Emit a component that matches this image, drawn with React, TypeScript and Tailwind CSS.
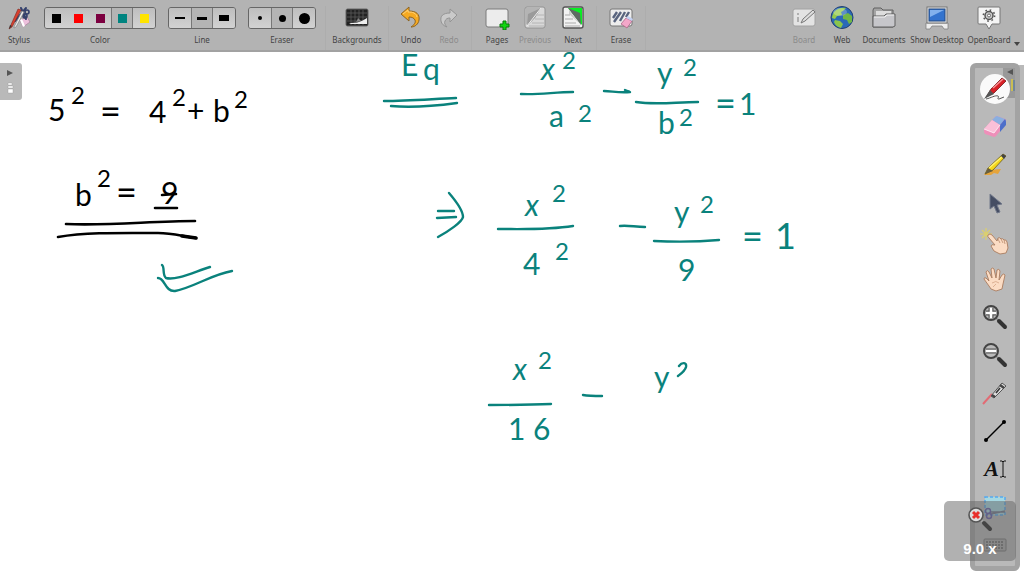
import React from "react";

const colors = [
  { name: "Black", fill: "bg-black" },
  { name: "Red", fill: "bg-[#fe0000]" },
  { name: "Maroon", fill: "bg-[#7c0040]" },
  { name: "Teal", fill: "bg-[#008480]", active: true },
  { name: "Yellow", fill: "bg-[#ffe400]" },
];

const lines = [
  { name: "Fine line", shape: "w-[10px] h-[2px] bg-black" },
  { name: "Medium line", shape: "w-[10px] h-[3px] bg-black", active: true },
  { name: "Strong line", shape: "w-[10px] h-[6px] bg-black" },
];

const erasers = [
  { name: "Small eraser", shape: "w-1 h-1 rounded-full bg-black" },
  { name: "Medium eraser", shape: "w-[7px] h-[7px] rounded-full bg-black", active: true },
  { name: "Large eraser", shape: "w-[11px] h-[11px] rounded-full bg-black" },
];

// toolbar icons
const StylusIcon = () => (
  <svg width="24" height="24" viewBox="0 0 24 24">
    <path d="M13 14 20 11l3 5-7 5z" fill="#ecc0dc" stroke="#a77f9c" strokeWidth=".7" />
    <path d="m13 14 3 7 2-1-3-7z" fill="#fff" />
    <path d="M8 15 19 2M14 2l5 11" stroke="#33406c" strokeWidth="2" strokeLinecap="round" />
    <circle cx="18" cy="10" r="2" fill="none" stroke="#33406c" strokeWidth="1.6" />
    <circle cx="20" cy="6" r="2" fill="none" stroke="#33406c" strokeWidth="1.6" />
    <path d="M3 21 11 3l3 1-9 17-3 2z" fill="#d9402f" stroke="#7c2620" strokeWidth=".6" />
    <path d="m7 21 8-16 2 1-8 15-2 1z" fill="#eee" stroke="#777" strokeWidth=".6" />
    <path d="m2 23 1-4 2 1z" fill="#333" />
  </svg>
);

const BackgroundsIcon = () => (
  <svg width="24" height="24" viewBox="0 0 24 24">
    <rect x="1" y="3" width="22" height="17" rx="1.5" fill="#222" stroke="#666" />
    <path d="M2 7h20M2 11h20M2 15h20M6 4v15M10 4v15M14 4v15M18 4v15" stroke="#5c5c5c" strokeWidth=".8" />
    <path d="M6 17c6 0 10-1 16-5v6H4z" fill="#eee" />
    <path d="M6 17c5 0 6-2 7-5l3 3z" fill="#888" />
  </svg>
);

const UndoIcon = () => (
  <svg width="24" height="24" viewBox="0 0 24 24">
    <path
      d="M2 8 10 1v4c7 0 11 3 10 9-.5 4-4 7-8 7 3-2 5-4 4-7-1-2-3-3-6-3v4z"
      fill="#f6aa22"
      stroke="#8c6424"
      strokeLinejoin="round"
    />
    <path d="m4 8 5-4v2c5 0 8 1 9 5" fill="none" stroke="#ffd27a" />
  </svg>
);

const RedoIcon = () => (
  <svg width="24" height="24" viewBox="0 0 24 24">
    <path
      d="M20 9 13 3v4C6 7 3 10 4 15c.5 3 3 5 6 6-2-2-3-4-2-6 1-2 2-3 5-3v4z"
      fill="#cacaca"
      stroke="#949494"
      strokeLinejoin="round"
    />
  </svg>
);

const PagesIcon = () => (
  <svg width="26" height="24" viewBox="0 0 26 24">
    <rect x="2" y="3" width="22" height="18" rx="2" fill="#ececec" stroke="#7a7a7a" />
    <path d="M20 16h3v3h3v3h-3v3h-3v-3h-3v-3h3z" transform="translate(-1 -1)" fill="#10d510" stroke="#087a08" />
  </svg>
);

const PreviousIcon = () => (
  <svg width="24" height="24" viewBox="0 0 24 24">
    <rect x="2" y="1" width="20" height="21" rx="2" fill="#d9d9d9" stroke="#929292" />
    <path d="M3 2h15L3 19z" fill="#b4b4b4" />
    <path d="M4 20 5 8 18 2l-6 10z" fill="#9a9a9a" />
    <path d="M14 9h7M12 13h9M9 17h12M6 20h15" stroke="#b4b4b4" />
    <path d="M4 20 18 2" stroke="#eee" />
  </svg>
);

const NextIcon = () => (
  <svg width="24" height="24" viewBox="0 0 24 24">
    <rect x="2" y="1" width="20" height="21" rx="2" fill="#f2f2f2" stroke="#555" strokeWidth="1.4" />
    <path d="M7 2h14v17z" fill="#08ef23" />
    <path d="M7 2 20 19l-1-12z" fill="#5f6a64" />
    <path d="M8 4v4l10 9z" fill="#ccc" />
    <path d="M4 9h5M4 13h8M4 17h11M4 20h15" stroke="#aaa" />
  </svg>
);

const EraseIcon = () => (
  <svg width="26" height="24" viewBox="0 0 26 24">
    <rect x="2" y="3" width="22" height="17" rx="2" fill="#ededed" stroke="#777" />
    <path d="m5 12 4-6M6 16l7-10M12 15l5-9M18 11l3-5" fill="none" stroke="#59647e" strokeWidth="2.4" />
    <path d="m13 18 5-6 6 3-5 7z" fill="#f3a7c9" stroke="#a96786" strokeWidth=".8" />
    <path d="m18 12 2-2 5 3-1 2z" fill="#c2d0f2" />
  </svg>
);

const BoardIcon = () => (
  <svg width="26" height="24" viewBox="0 0 26 24">
    <rect x="2" y="3" width="22" height="17" rx="2" fill="#e3e3e3" stroke="#a2a2a2" />
    <path d="M7 7v2M7 11v5" stroke="#999" strokeWidth="1.4" />
    <path d="m10 17 2-4L22 4l2 2-10 9z" fill="#ddd" stroke="#777" />
  </svg>
);

const WebIcon = () => (
  <svg width="24" height="24" viewBox="0 0 24 24">
    <circle cx="12" cy="11.5" r="11" fill="#2a69b8" stroke="#203f72" />
    <path d="M4 6c3-4 9-5 12-4l-3 3-2 1 1 3-5 1-2 3-3-1c0-2 1-4 2-6z" fill="#95ca4b" />
    <path d="m13 9 5-2 4 3v6l-3 2-2-4-4-1z" fill="#70b646" />
    <path d="m5 14 5 1 3 3-2 4c-4-1-6-3-7-6z" fill="#8bc54b" />
    <ellipse cx="10" cy="6" rx="7" ry="4" fill="#fff" opacity=".25" />
  </svg>
);

const DocumentsIcon = () => (
  <svg width="26" height="24" viewBox="0 0 26 24">
    <path d="M2 21V4l1-2h7l2 2h10v17z" fill="#a4a4a4" stroke="#606060" />
    <path d="M5 5h15v12H5z" fill="#ddd" />
    <path d="M2 21V10h11l2-2h9v12l-2 1z" fill="#c6c6ca" stroke="#606060" />
    <path d="M3 11h11l2-2h7" fill="none" stroke="#f3f3f3" />
  </svg>
);

const DesktopIcon = () => (
  <svg width="26" height="24" viewBox="0 0 26 24">
    <path d="M2 17h22v6h-4l-2-3H8l-2 3H2z" fill="#ededed" stroke="#777" strokeWidth=".7" />
    <rect x="3" y="1" width="20" height="16" fill="#e8e8e8" stroke="#777" />
    <rect x="5" y="3" width="16" height="12" fill="#3373ce" stroke="#274b80" />
    <path d="M6 4h14L6 11z" fill="#82b1ed" />
  </svg>
);

const OpenBoardIcon = () => (
  <svg width="26" height="24" viewBox="0 0 26 24">
    <path d="M3 1h20q1 0 1 1v15q0 1-1 1h-7l-3 5-3-5H3q-1 0-1-1V2q0-1 1-1z" fill="#f4f4f4" stroke="#777" />
    <circle cx="13" cy="9.5" r="4" fill="#ccc" stroke="#555" strokeWidth="1.5" />
    <circle cx="13" cy="9.5" r="5.6" fill="none" stroke="#555" strokeWidth="1.6" strokeDasharray="1.6 2.8" />
    <circle cx="13" cy="9.5" r="1.5" fill="#fff" stroke="#666" />
  </svg>
);

// palette icons
const PenIcon = () => (
  <svg width="30" height="30" viewBox="0 0 30 30">
    <circle cx="15" cy="15" r="15" fill="#fafafa" />
    <path d="m7 22 4-7L22 4l4 3-12 12z" fill="#d72027" stroke="#6e171b" strokeWidth=".8" />
    <path d="M13 14 23 5" stroke="#f79093" strokeWidth="1.5" />
    <path d="m4 25 6-9 4 4z" fill="#555" />
    <path d="M6 25c5-1 9-4 12-3 2 1-2 3 1 3l5-2" fill="none" stroke="#555" />
  </svg>
);

const EraserIcon = () => (
  <svg width="26" height="26" viewBox="0 0 26 26">
    <path d="m2 15 11-12q1-1 2-1l8 3q1 0 1 2v3L14 22q-1 1-2 1l-9-3-1-2z" fill="#ee8fb9" />
    <path d="m10 6 3-3q1-1 2-1l8 3-5 6z" fill="#8aafe0" />
    <path d="m18 11 5-6q1 1 1 3v3l-6 7z" fill="#4c6fca" />
    <path d="m2 15 8-9 8 5-6 8z" fill="#fac0d8" />
    <path d="m2 15 10 4 6-8" fill="none" stroke="#fff" strokeWidth=".7" />
  </svg>
);

const MarkerIcon = () => (
  <svg width="26" height="26" viewBox="0 0 26 26">
    <path d="m2 23 4-5 13-1-3 5-4-1-3 2z" fill="#e6a43a" />
    <path d="m3 22 3-6L21 2l3 2-13 14z" fill="#f6d71a" stroke="#675719" strokeWidth=".8" />
    <path d="M7 16 21 4" stroke="#fff26e" strokeWidth="1.5" />
    <path d="m3 22 3-6 5 3z" fill="#665d40" />
    <path d="m19 4 2-2 3 2-2 3z" fill="#444" />
  </svg>
);

const ArrowIcon = () => (
  <svg width="24" height="26" viewBox="0 0 24 26">
    <path d="M7 4v15l4-3 3 7 3-1-3-7 5-1z" fill="#454d63" stroke="#71788a" />
  </svg>
);

const PointIcon = () => (
  <svg width="32" height="30" viewBox="0 0 32 30">
    <path d="M7 2v12M1 8h12M3 4l8 8M11 4l-8 8" stroke="#ddd06b" strokeWidth="1.2" />
    <path
      d="m9 9q2-2 4 0l5 6 1-3q2-1 3 1 2-1 3 1 2-1 3 2l1 6-2 5-6 1-6-3-3-5q0-2 4-1l-6-7q-2-2-1-3z"
      fill="#fbdcc4"
      stroke="#aa7d60"
      strokeWidth=".9"
    />
    <path d="m19 13 2 4m1-4 2 4m1-3 1 4" stroke="#b98b6d" strokeWidth=".8" />
  </svg>
);

const HandIcon = () => (
  <svg width="24" height="26" viewBox="0 0 24 26">
    <path
      d="m6 20-5-7q0-2 2-1l3 3-3-9q1-3 3 0l3 6-1-9q2-2 3 0l2 9 1-8q2-2 3 1l-1 9 3-5q2-2 3 0l-2 9-1 5-6 2-5-2z"
      fill="#fbdcc4"
      stroke="#aa7d60"
      strokeWidth=".9"
      strokeLinejoin="round"
    />
    <path d="M9 17q4-3 7 0M10 21l3-3" fill="none" stroke="#d3a487" strokeWidth=".8" />
  </svg>
);

const ZoomIcon = ({ sign }: { sign: string }) => (
  <svg width="26" height="26" viewBox="0 0 26 26">
    <path d="m14 14 4 4" stroke="#999" strokeWidth="2" />
    <path d="m17 17 6 6" stroke="#333" strokeWidth="4" strokeLinecap="round" />
    <circle cx="9" cy="9" r="7" fill="#bbb" stroke="#444" strokeWidth="2" />
    <path d={sign} stroke="#555" strokeWidth="5" />
    <path d={sign} stroke="#fff" strokeWidth="2.6" />
  </svg>
);

const LaserIcon = () => (
  <svg width="26" height="26" viewBox="0 0 26 26">
    <path d="m1 24 9-10" stroke="#e26b74" strokeWidth="2" />
    <path d="M9 16 20 3l4 3-12 12z" fill="#ddd" stroke="#555" />
    <path d="m10 15 3 2M18 5l4 3" stroke="#444" strokeWidth="2.5" />
    <path d="m14 13 4-5" stroke="#333" strokeWidth="1.6" />
  </svg>
);

const LineIcon = () => (
  <svg width="24" height="24" viewBox="0 0 24 24">
    <path d="M3 21 21 3" stroke="#000" strokeWidth="1.4" />
    <circle cx="3" cy="21" r="2" />
    <circle cx="21" cy="3" r="2" />
  </svg>
);

const TextIcon = () => (
  <span className="flex items-center gap-px font-['Liberation_Serif',serif] text-[22px] leading-none text-[#111]">
    <b className="italic">A</b>
    <svg width="6" height="18" viewBox="0 0 6 18">
      <path d="M0 1h2l1 1 1-1h2M3 2v14M0 17h2l1-1 1 1h2" fill="none" stroke="#111" />
    </svg>
  </span>
);

const CaptureIcon = () => (
  <svg width="24" height="26" viewBox="0 0 24 26">
    <rect x="2" y="3" width="20" height="18" fill="#a6d8e2" stroke="#55a9ee" strokeWidth="1.5" strokeDasharray="3 2" />
    <path d="M7 18h15M8 20l14-3" stroke="#73798c" strokeWidth="1.4" />
    <circle cx="5" cy="17" r="2.5" fill="none" stroke="#655eaa" strokeWidth="1.5" />
    <circle cx="6" cy="22" r="2.5" fill="none" stroke="#655eaa" strokeWidth="1.5" />
  </svg>
);

const KeyboardIcon = () => (
  <svg width="24" height="24" viewBox="0 0 24 24">
    <rect x="1" y="6" width="22" height="12" rx="1" fill="#aaa" stroke="#777" />
    <path d="M3 9h18M3 12h18M3 15h18" stroke="#666" strokeWidth="1.6" strokeDasharray="2 1" />
  </svg>
);

const tools = [
  { name: "Pen", icon: <PenIcon /> },
  { name: "Eraser", icon: <EraserIcon /> },
  { name: "Marker", icon: <MarkerIcon /> },
  { name: "Select", icon: <ArrowIcon /> },
  { name: "Interact", icon: <PointIcon /> },
  { name: "Scroll page", icon: <HandIcon /> },
  { name: "Zoom in", icon: <ZoomIcon sign="M9 4v10M4 9h10" /> },
  { name: "Zoom out", icon: <ZoomIcon sign="M4 9h10" /> },
  { name: "Laser pointer", icon: <LaserIcon /> },
  { name: "Draw line", icon: <LineIcon /> },
  { name: "Write text", icon: <TextIcon /> },
  { name: "Capture", icon: <CaptureIcon /> },
  { name: "Keyboard", icon: <KeyboardIcon /> },
];

type ToolProps = {
  label: string;
  icon: React.ReactNode;
  width?: string;
  disabled?: boolean;
};

const Tool = ({ label, icon, width = "w-[38px]", disabled }: ToolProps) => (
  <button
    disabled={disabled}
    className={`flex shrink-0 flex-col items-center gap-[5px] whitespace-nowrap ${width} ${
      disabled ? "text-[#8b8b8b]" : "text-[#444]"
    }`}
  >
    <span className="flex h-6 items-center justify-center">{icon}</span>
    <span>{label}</span>
  </button>
);

type Choice = { name: string; shape?: string; fill?: string; active?: boolean };

const Choices = ({ label, items }: { label: string; items: Choice[] }) => (
  <div className="flex shrink-0 flex-col items-center gap-[5px] text-[#444]">
    <div className="flex h-6 items-center">
      <div className="flex h-[22px] overflow-hidden rounded-[3px] border border-[#666]">
        {items.map((item, i) => (
          <button
            key={i}
            aria-label={item.name}
            className={`flex w-[22px] items-center justify-center ${
              item.active ? "border-x border-[#777] bg-[#b4b4b4]" : "bg-linear-to-b from-[#bebebe] to-[#d2d2d2]"
            }`}
          >
            <span className={item.shape ?? `h-[9px] w-[9px] ${item.fill}`} />
          </button>
        ))}
      </div>
    </div>
    <span>{label}</span>
  </div>
);

const Separator = () => <div className="h-full w-px shrink-0 bg-[#adadad]" />;

const Toolbar = () => (
  <header className="flex h-[52px] shrink-0 overflow-hidden border-b-2 border-[#a2a2a2] bg-[#b3b3b3] pt-[6px] font-['Noto_Sans',sans-serif] text-[8px] leading-[10px]">
    <Tool label="Stylus" icon={<StylusIcon />} />
    <div className="flex gap-3 pr-[9px] pl-[6px]">
      <Choices label="Color" items={colors} />
      <Choices label="Line" items={lines} />
      <Choices label="Eraser" items={erasers} />
    </div>
    <Separator />
    <Tool label="Backgrounds" icon={<BackgroundsIcon />} width="w-[62px]" />
    <Separator />
    <div className="flex px-[3px]">
      <Tool label="Undo" icon={<UndoIcon />} />
      <Tool label="Redo" icon={<RedoIcon />} disabled />
    </div>
    <Separator />
    <div className="flex pr-1 pl-[6px]">
      <Tool label="Pages" icon={<PagesIcon />} />
      <Tool label="Previous" icon={<PreviousIcon />} disabled />
      <Tool label="Next" icon={<NextIcon />} />
    </div>
    <Separator />
    <Tool label="Erase" icon={<EraseIcon />} width="w-12" />
    <Separator />
    <div className="ml-auto flex">
      <Tool label="Board" icon={<BoardIcon />} disabled />
      <Tool label="Web" icon={<WebIcon />} />
      <Tool label="Documents" icon={<DocumentsIcon />} width="w-[46px]" />
      <Tool label="Show Desktop" icon={<DesktopIcon />} width="w-[60px]" />
      <Tool label="OpenBoard" icon={<OpenBoardIcon />} width="w-11" />
      <svg width="13" height="44" viewBox="0 0 13 44">
        <path d="M3 36h6l-3 4z" fill="#444" />
      </svg>
    </div>
  </header>
);

// handwriting on the page
const Ink = () => (
  <svg
    className="absolute inset-0 h-full w-full overflow-visible font-['Lato',sans-serif] text-[30px]"
    viewBox="0 52 1024 524"
    preserveAspectRatio="xMinYMin meet"
  >
    <g fill="#000">
      <text x="48" y="121">5</text>
      <text x="71" y="104" className="text-[24px]">2</text>
      <text x="100" y="124" className="text-[36px]">=</text>
      <text x="149" y="123">4</text>
      <text x="172" y="106" className="text-[24px]">2</text>
      <text x="187" y="122">+</text>
      <text x="213" y="122">b</text>
      <text x="234" y="108" className="text-[24px]">2</text>
      <text x="75" y="206">b</text>
      <text x="97" y="187" className="text-[24px]">2</text>
      <text x="116" y="205" className="text-[36px]">=</text>
      <text x="161" y="204">9</text>
    </g>
    <g fill="none" stroke="#000" strokeWidth="2.6" strokeLinecap="round" strokeLinejoin="round">
      <path d="M155 208h22M162 195l14-1" />
      <path d="M66 224c42 2 86-3 129-3" />
      <path d="M58 237c30-5 66-4 100-4 16 0 26 4 38 5" />
      <path d="m182 236 14 2" strokeWidth="3.6" />
    </g>
    <g fill="#0a827c">
      <text x="401" y="76">E</text>
      <text x="423" y="80">q</text>
      <text x="541" y="80" className="italic">x</text>
      <text x="562" y="69" className="text-[24px]">2</text>
      <text x="549" y="127">a</text>
      <text x="578" y="122" className="text-[24px]">2</text>
      <text x="657" y="84">y</text>
      <text x="683" y="76" className="text-[24px]">2</text>
      <text x="658" y="134">b</text>
      <text x="679" y="126" className="text-[24px]">2</text>
      <text x="715" y="116" className="text-[36px]">=</text>
      <text x="739" y="115">1</text>

      <text x="525" y="216" className="italic">x</text>
      <text x="552" y="202" className="text-[24px]">2</text>
      <text x="523" y="275">4</text>
      <text x="555" y="260" className="text-[24px]">2</text>
      <text x="674" y="223">y</text>
      <text x="700" y="213" className="text-[24px]">2</text>
      <text x="678" y="281">9</text>
      <text x="742" y="249" className="text-[36px]">=</text>
      <text x="775" y="249" className="text-[36px]">1</text>

      <text x="513" y="380" className="italic">x</text>
      <text x="538" y="369" className="text-[24px]">2</text>
      <text x="508" y="440">1</text>
      <text x="533" y="440">6</text>
      <text x="654" y="388">y</text>
    </g>
    <g fill="none" stroke="#0a827c" strokeWidth="2.4" strokeLinecap="round" strokeLinejoin="round">
      <path d="M384 101c24 0 48-2 72-3M391 106c20 2 44 0 66-3" />
      <path d="M521 94c18 1 34-2 52-2M604 91c8 0 14 2 26 1l-5-2M636 102c20 3 40 0 62 0" />
      <path d="M438 211h16M437 218l19-1M449 193c6 7 14 17 14 24-1 5-14 14-25 20" />
      <path d="M498 229c26 0 50 1 75-3M620 226c8-1 15 1 25 1M654 241c22 1 42 1 65-1" />
      <path d="M489 405c22 0 40 0 62-1M583 395c6 1 12 1 19 1M679 366c3-4 8-4 7 1-1 4-4 6-8 9" />
      <path d="M162 265c3 2 0 10 4 13 10 3 30-7 44-11" />
      <path d="M158 278c7 0 7 14 17 13 20-4 35-16 57-20" />
    </g>
  </svg>
);

const App = () => {
  return (
    <div className="flex h-screen flex-col overflow-hidden bg-white">
      <Toolbar />
      <main className="relative flex-1">
        <Ink />
        <button
          aria-label="Show pages"
          className="absolute top-[11px] left-0 flex h-[37px] w-[22px] items-center justify-center rounded-r-[3px] bg-[#b9b9b9]"
        >
          <svg width="12" height="30" viewBox="0 0 12 30">
            <path d="m2 3 6 3-6 3z" fill="#555" />
            <path d="M3 16h4v2H3zM3 19h5v2H3zM3 22h5v4H3z" fill="#fff" stroke="#999" strokeWidth=".4" />
          </svg>
        </button>
        <button
          aria-label="Show library"
          className="absolute top-[13px] right-0 h-[35px] w-[22px] rounded-l-[3px] bg-[#b9b9b9]"
        />
        <nav className="absolute top-[11px] right-1 flex w-[50px] flex-col items-center rounded-[6px] border-[5px] border-[#a3a3a3] bg-[#b9b9b9] py-[2px]">
          {/* library tab shows through the palette corner */}
          <div className="absolute top-0 right-0 h-[30px] w-3 bg-[#999]">
            <svg width="12" height="30" viewBox="0 0 12 30">
              <path d="M10 1v6L4 4z" fill="#555" />
              <path d="M9 11v12" stroke="#c9bd54" strokeWidth="2" />
              <path d="M11 12v11" stroke="#4873a0" />
            </svg>
          </div>
          {tools.map((tool) => (
            <button
              key={tool.name}
              aria-label={tool.name}
              className="relative flex h-[38px] w-full items-center justify-center"
            >
              {tool.icon}
            </button>
          ))}
        </nav>
        <div className="absolute right-2 bottom-[15px] flex h-[60px] w-[72px] flex-col items-center justify-between rounded-[5px] bg-[#646464]/50 pt-[5px] pb-1 font-['Liberation_Sans',sans-serif] text-[15px] leading-4 font-bold text-white">
          <svg width="26" height="26" viewBox="0 0 26 26">
            <path d="m14 14 4 4" stroke="#aaa" strokeWidth="2" />
            <path d="m17 17 6 6" stroke="#444" strokeWidth="4" strokeLinecap="round" />
            <circle cx="9" cy="9" r="7" fill="#ddd" stroke="#555" strokeWidth="1.6" />
            <path d="m6 6 6 6M12 6l-6 6" stroke="#e8302c" strokeWidth="3" />
          </svg>
          <span>9.0 x</span>
        </div>
      </main>
    </div>
  );
};

export default App;
